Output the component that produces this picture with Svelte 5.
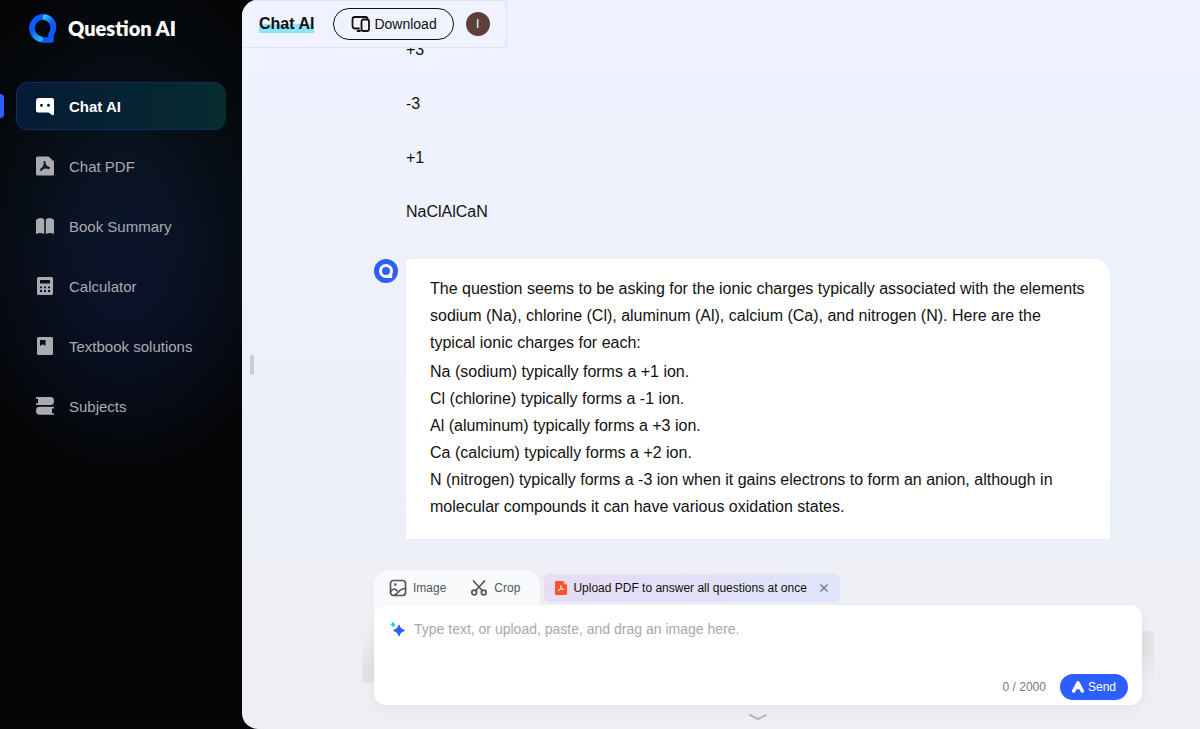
<script>
    let text = $state("");
    let active = $state("chat");
    let showTip = $state(true);

    const menu = [
        {id: "chat", name: "Chat AI"},
        {id: "pdf", name: "Chat PDF"},
        {id: "book", name: "Book Summary"},
        {id: "calc", name: "Calculator"},
        {id: "textbook", name: "Textbook solutions"},
        {id: "subjects", name: "Subjects"}
    ];

    const question = ["+3", "-3", "+1", "NaClAlCaN"];

    const intro = "The question seems to be asking for the ionic charges typically associated with the elements sodium (Na), chlorine (Cl), aluminum (Al), calcium (Ca), and nitrogen (N). Here are the typical ionic charges for each:";

    const charges = [
        "Na (sodium) typically forms a +1 ion.",
        "Cl (chlorine) typically forms a -1 ion.",
        "Al (aluminum) typically forms a +3 ion.",
        "Ca (calcium) typically forms a +2 ion.",
        "N (nitrogen) typically forms a -3 ion when it gains electrons to form an anion, although in molecular compounds it can have various oxidation states."
    ];

    function select(event, id){
        event.preventDefault();
        active = id;
    }
</script>

<div class="app">
    <aside class="sidebar">
        <a class="brand" href="/">
            <svg width="30" height="30" viewBox="0 0 30 30" fill="none">
                <defs>
                    <linearGradient id="logoTop" x1="17" y1="3" x2="24" y2="9" gradientUnits="userSpaceOnUse">
                        <stop stop-color="#2cc4ff"/>
                        <stop offset="1" stop-color="#0a5cff"/>
                    </linearGradient>
                    <linearGradient id="logoBottom" x1="13" y1="27" x2="4" y2="18" gradientUnits="userSpaceOnUse">
                        <stop stop-color="#1cc0ff"/>
                        <stop offset="1" stop-color="#0a5cff"/>
                    </linearGradient>
                </defs>
                <path d="M15 4A11 11 0 0 1 23 21.500V27H13" stroke="#0a5cff" stroke-width="5.600" stroke-linejoin="round"/>
                <path d="M12 26A11.300 11.300 0 0 1 15 3.900" stroke="url(#logoBottom)" stroke-width="5.600" stroke-linecap="round"/>
                <path d="M17.500 4.200A11.200 11.200 0 0 1 25.500 12" stroke="url(#logoTop)" stroke-width="5.600" stroke-linecap="round"/>
            </svg>
            <span>Question AI</span>
        </a>
        <nav>
            {#each menu as item}
                <a class="item" class:active={active === item.id} href={"#" + item.id} onclick={(event) => select(event, item.id)}>
                    <svg width="20" height="20" viewBox="0 0 20 20" fill="currentColor">
                        {#if item.id === "chat"}
                            <path fill-rule="evenodd" d="M4 2H17a2 2 0 0 1 2 2V18a1.200 1.200 0 0 1-1.900 1L13.500 16.500H3a2 2 0 0 1-2-2V5a3 3 0 0 1 3-3ZM6.500 7.700a1.500 1.500 0 1 0 0 3 1.500 1.500 0 0 0 0-3Zm7 0a1.500 1.500 0 1 0 0 3 1.500 1.500 0 0 0 0-3Z"/>
                        {:else if item.id === "pdf"}
                            <path d="M2.500 0.500H13.500L19 5.500V18a1.500 1.500 0 0 1-1.500 1.500H2.500A1.500 1.500 0 0 1 1 18V2A1.500 1.500 0 0 1 2.500 0.500Z"/>
                            <path d="M9.500 6Q10.300 10 6 14M6.500 13Q10 10.500 14 12M10 8.500Q11 11 14 12" fill="none" stroke="#0b1726" stroke-width="1.900" stroke-linecap="round"/>
                        {:else if item.id === "book"}
                            <path d="M1 4Q5 0.500 9.200 3.500V18Q5 15.800 1 18Z"/>
                            <path d="M10.800 3.500Q15 0.500 19 4V18Q15 15.800 10.800 18Z"/>
                        {:else if item.id === "calc"}
                            <path fill-rule="evenodd" d="M3.500 1H16.500A1.500 1.500 0 0 1 18 2.500V17.500A1.500 1.500 0 0 1 16.500 19H3.500A1.500 1.500 0 0 1 2 17.500V2.500A1.500 1.500 0 0 1 3.500 1ZM5 4V7.500H15V4ZM5 10.500V12.200H7V10.500ZM9 10.500V12.200H11V10.500ZM13 10.500V12.200H15V10.500ZM5 14V16H7V14ZM9 14V16H11V14ZM13 14V16H15V14Z"/>
                        {:else if item.id === "textbook"}
                            <path fill-rule="evenodd" d="M3.500 1H16.500A1.500 1.500 0 0 1 18 2.500V17.500A1.500 1.500 0 0 1 16.500 19H3.500A1.500 1.500 0 0 1 2 17.500V2.500A1.500 1.500 0 0 1 3.500 1ZM5 4V10L7.800 8.200L10.500 10V4Z"/>
                        {:else}
                            <path d="M1 1H15.500A3.500 4 0 0 1 15.500 9H1V7.300H3V2.700H1Z"/>
                            <path d="M19 10.800H4.500A3.500 4 0 0 0 4.500 18.800H19V17.200H17V12.500H19Z"/>
                        {/if}
                    </svg>
                    <span>{item.name}</span>
                </a>
            {/each}
        </nav>
    </aside>

    <main class="main">
        <header class="topbar">
            <h1>Chat AI</h1>
            <button class="download">
                <svg width="20" height="18" viewBox="0 0 20 18" fill="none" stroke="currentColor" stroke-width="1.800" stroke-linecap="round" stroke-linejoin="round">
                    <path d="M8 13.500H4A2.500 2.500 0 0 1 1.500 11V4.500A2.500 2.500 0 0 1 4 2H14.500Q16.500 2 16.500 4M6.500 16H9"/>
                    <rect x="10.500" y="4.500" width="7.500" height="11.500" rx="2"/>
                </svg>
                Download
            </button>
            <span class="user">I</span>
        </header>

        <section class="chat">
            <div class="question">
                {#each question as line}
                    <p>{line}</p>
                {/each}
            </div>
            <div class="answer">
                <svg class="avatar" width="24" height="24" viewBox="0 0 24 24">
                    <circle cx="12" cy="12" r="12" fill="#2d5fff"/>
                    <path fill="#fff" fill-rule="evenodd" d="M12 5A7 7 0 1 0 12 19H17.500A0.800 0.800 0 0 0 18.200 18V15.200A7 7 0 0 0 12 5ZM12 8A4 4 0 1 1 12 16A4 4 0 0 1 12 8Z"/>
                </svg>
                <div class="bubble">
                    <p>{intro}</p>
                    <ul>
                        {#each charges as line}
                            <li>{line}</li>
                        {/each}
                    </ul>
                </div>
            </div>
        </section>

        <section class="composer">
            <div class="tools">
                <div class="tabs">
                    <button class="tool">
                        <svg width="18" height="18" viewBox="0 0 18 18" fill="none" stroke="currentColor" stroke-width="1.700" stroke-linecap="round" stroke-linejoin="round">
                            <rect x="1.500" y="1.500" width="15" height="15" rx="3"/>
                            <path d="M1.500 13C3 9.500 6.500 9.500 8 11.800M5.500 16C9.500 15 9.500 9.500 16.500 9.500"/>
                            <circle cx="6.300" cy="5.500" r="0.500" fill="currentColor"/>
                        </svg>
                        Image
                    </button>
                    <button class="tool">
                        <svg width="18" height="18" viewBox="0 0 18 18" fill="none" stroke="currentColor" stroke-width="1.700" stroke-linecap="round">
                            <circle cx="4.200" cy="13.500" r="2.400"/>
                            <circle cx="13.800" cy="13.500" r="2.400"/>
                            <path d="M3.500 2L12.200 11.500M14.500 2L5.800 11.500"/>
                        </svg>
                        Crop
                    </button>
                </div>
                {#if showTip}
                    <div class="tip">
                        <svg width="12" height="14" viewBox="0 0 12 14">
                            <path d="M1 0H8.500L12 3.500V13a1 1 0 0 1-1 1H1a1 1 0 0 1-1-1V1a1 1 0 0 1 1-1Z" fill="#ff5026"/>
                            <path d="M8.500 0L12 3.500H8.500Z" fill="#ffab96"/>
                            <path d="M5.800 4.500C6.500 6.500 5 8.500 3 10C4.500 8.300 7 7.800 9 8.500C7.500 8.500 6 7 5.800 4.500Z" fill="none" stroke="#fff" stroke-width="0.800"/>
                        </svg>
                        <a href="#pdf">Upload PDF to answer all questions at once</a>
                        <button class="close" aria-label="Close" onclick={() => showTip = false}>
                            <svg width="10" height="10" viewBox="0 0 10 10" stroke="#737580" stroke-width="1.300">
                                <path d="M1.500 1.500L8.500 8.500M8.500 1.500L1.500 8.500"/>
                            </svg>
                        </button>
                    </div>
                {/if}
            </div>
            <div class="box-wrap">
                <div class="box">
                    <div class="entry">
                        <svg width="16" height="16" viewBox="0 0 16 16">
                            <path d="M9 4.500Q10 8.500 14 9.500Q10 10.500 9 14.500Q8 10.500 4 9.500Q8 8.500 9 4.500Z" fill="#2d5fff" stroke="#2d5fff" stroke-width="1.400" stroke-linejoin="round"/>
                            <path d="M3 1.300Q3.300 3.200 5.200 3.500Q3.300 3.800 3 5.700Q2.700 3.800 0.800 3.500Q2.700 3.200 3 1.300Z" fill="#14cce8" stroke="#14cce8" stroke-width="1" stroke-linejoin="round"/>
                        </svg>
                        <textarea rows="2" maxlength="2000" aria-label="Question" placeholder="Type text, or upload, paste, and drag an image here." bind:value={text}></textarea>
                    </div>
                    <div class="actions">
                        <span class="count">{text.length} / 2000</span>
                        <button class="send">
                            <svg width="14" height="14" viewBox="0 0 14 14" fill="none" stroke="#fff" stroke-width="3.600" stroke-linecap="round" stroke-linejoin="round">
                                <path d="M2.700 11L7 3L11.300 11M5.500 7.500H8.500"/>
                            </svg>
                            Send
                        </button>
                    </div>
                </div>
            </div>
            <button class="fold" aria-label="Collapse">
                <svg width="20" height="8" viewBox="0 0 20 8" fill="none" stroke="#b6b7bd" stroke-width="2" stroke-linecap="round" stroke-linejoin="round">
                    <path d="M2 2L10 6L18 2"/>
                </svg>
            </button>
        </section>
        <span class="handle"></span>
    </main>
</div>

<style>
    :global(body){
        margin: 0;
        background: #030406;
    }
    .app{
        display: flex;
        height: 100vh;
        font-family: "Liberation Sans", Arial, sans-serif;
        font-size: 16px;
        color: #111;
        background:
            radial-gradient(ellipse 150px 180px at 125px 290px, rgba(15, 17, 52, 0.6), transparent),
            radial-gradient(ellipse 180px 250px at 125px 220px, rgba(10, 26, 40, 0.9), transparent),
            #040507;
    }
    button{
        margin: 0;
        padding: 0;
        border: none;
        background: none;
        font-family: inherit;
        color: inherit;
        cursor: pointer;
    }
    a{
        color: inherit;
        text-decoration: none;
    }
    p, h1, ul{
        margin: 0;
        padding: 0;
        list-style: none;
    }
    svg{
        flex: none;
    }
    .sidebar{
        flex: none;
        box-sizing: border-box;
        width: 242px;
        padding: 12px 16px;
    }
    .brand{
        display: flex;
        align-items: center;
        gap: 10px;
        height: 32px;
        margin: 0 0 38px 12px;
        font-family: Lato, sans-serif;
        font-size: 20px;
        line-height: 20px;
        font-weight: 800;
        color: #fff;
    }
    nav{
        display: flex;
        flex-direction: column;
        gap: 12px;
    }
    .item{
        position: relative;
        display: flex;
        align-items: center;
        gap: 14px;
        height: 46px;
        padding-left: 18px;
        border: 1px solid transparent;
        border-radius: 12px;
        font-size: 15px;
        color: #a9abb1;
    }
    .item.active{
        font-weight: bold;
        color: #fff;
        border-color: #132d60;
        border-right-color: #07302f;
        background: linear-gradient(90deg, #061a35, #062c31);
    }
    .item.active::before{
        content: "";
        position: absolute;
        left: -21px;
        top: 11px;
        width: 8px;
        height: 24px;
        border-radius: 4px;
        background: #2d5fff;
    }
    .main{
        position: relative;
        flex: 1;
        min-width: 0;
        display: flex;
        flex-direction: column;
        overflow: hidden;
        border-radius: 16px 0 0 16px;
        background: linear-gradient(180deg, #f0f2ff 0%, #edf0fa 60%, #eeeff4 85%);
    }
    .topbar{
        position: absolute;
        top: 0;
        left: 0;
        z-index: 2;
        box-sizing: border-box;
        display: flex;
        align-items: center;
        height: 48px;
        padding: 0 16px 0 17px;
        border: 1px solid #dfe1ec;
        border-left: none;
        background: #f0f2ff;
    }
    h1{
        font-size: 16px;
        line-height: 18px;
        background: linear-gradient(transparent 50%, #8ae6f5 50%);
    }
    .download{
        display: flex;
        align-items: center;
        gap: 3px;
        height: 32px;
        margin: 0 12px 0 19px;
        padding: 0 16px 0 17px;
        border: 1px solid #111;
        border-radius: 16px;
        font-size: 14px;
    }
    .user{
        width: 24px;
        height: 24px;
        border-radius: 50%;
        background: #5d4037;
        font-size: 12px;
        line-height: 24px;
        text-align: center;
        color: #fff;
    }
    .chat{
        flex: 1;
        min-height: 0;
        display: flex;
        flex-direction: column;
        justify-content: flex-end;
        overflow: hidden;
        padding: 0 90px 0 132px;
        line-height: 27px;
    }
    .question{
        display: flex;
        flex-direction: column;
        gap: 27px;
        padding: 0 0 34px 32px;
    }
    .answer{
        display: flex;
        gap: 8px;
    }
    .bubble{
        flex: 1;
        padding: 16px 24px 19px;
        border-radius: 4px 16px 0 0;
        background: #fff;
    }
    .bubble ul{
        margin-top: 2px;
    }
    .composer{
        padding: 32px 58px 4px 132px;
        font-size: 12px;
    }
    .tools{
        display: flex;
        align-items: flex-start;
        gap: 4px;
        height: 34px;
    }
    .tabs{
        display: flex;
        gap: 24px;
        height: 34px;
        padding: 0 20px 12px 15px;
        border-radius: 14px 14px 0 0;
        background: #f9fafc;
    }
    .tool{
        display: flex;
        align-items: center;
        gap: 6px;
        height: 34px;
        font-size: 12px;
        color: #55565c;
    }
    .tip{
        display: flex;
        align-items: center;
        height: 28px;
        margin-top: 3px;
        padding: 0 10px 0 11px;
        gap: 6px;
        border-radius: 6px;
        background: linear-gradient(90deg, #e6dcf5, #dfe4f9);
    }
    .close{
        display: flex;
        margin-left: 5px;
        padding: 1px;
    }
    .box-wrap{
        position: relative;
    }
    .box-wrap::before, .box-wrap::after{
        content: "";
        position: absolute;
        top: 26px;
        width: 12px;
        height: 52px;
    }
    .box-wrap::before{
        left: -12px;
        background: linear-gradient(#eeeff4, #e2e3e7 70%);
    }
    .box-wrap::after{
        right: -12px;
        background: linear-gradient(#e2e3e7 40%, #eeeff4);
    }
    .box{
        position: relative;
        z-index: 1;
        box-sizing: border-box;
        display: flex;
        flex-direction: column;
        justify-content: space-between;
        height: 100px;
        padding: 16px 14px 5px 16px;
        border-radius: 12px;
        background: #fff;
        box-shadow: 0 4px 12px rgba(40, 44, 70, 0.05);
    }
    .entry{
        display: flex;
        gap: 8px;
    }
    textarea{
        flex: 1;
        height: 40px;
        padding: 0;
        border: none;
        outline: none;
        resize: none;
        background: transparent;
        font-family: inherit;
        font-size: 14px;
        line-height: 16px;
    }
    textarea::placeholder{
        color: #a6a8b0;
    }
    .actions{
        display: flex;
        align-items: center;
        justify-content: flex-end;
        gap: 14px;
    }
    .count{
        font-size: 12px;
        color: #77787d;
    }
    .send{
        display: flex;
        align-items: center;
        gap: 3px;
        height: 26px;
        padding: 0 12px 0 11px;
        border-radius: 13px;
        font-size: 12px;
        color: #fff;
        background: #2d5fff;
    }
    .fold{
        display: flex;
        justify-content: center;
        width: 100%;
        padding: 8px 0 4px;
    }
    .handle{
        position: absolute;
        left: 8px;
        top: calc(50% - 10px);
        width: 4px;
        height: 20px;
        border-radius: 2px;
        background: #cbcccc;
    }
</style>
